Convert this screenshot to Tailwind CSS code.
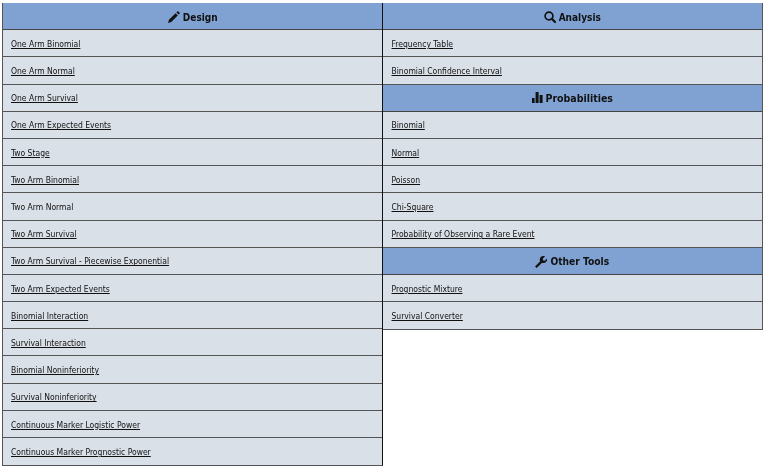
<!DOCTYPE html>
<html><head><meta charset="utf-8"><script src="https://cdn.jsdelivr.net/npm/@tailwindcss/browser@4"></script></head>
<body class="bg-white overflow-hidden">
<div class="w-[768px] h-[470px] pt-[3px] pl-[2px] font-['DejaVu_Sans_Condensed','DejaVu_Sans',sans-serif] text-[8.5px] text-[#111] blur-[0.4px]">
<div class="flex items-start w-[761px]">
<div class="w-[380.5px] border-l border-r border-b border-[#555] border-r-[#111] [&>a]:h-[27.2px] [&>a]:flex [&>a]:items-center [&>a]:pl-2 [&>a]:pt-[2px] [&>a]:bg-[#dae0e8] [&>a]:border-b [&>a]:border-[#555] [&>a]:underline [&>a:last-child]:border-b-0">
<div class="h-[27.2px] flex items-center justify-center gap-[3px] pt-[2px] pl-[1px] bg-[#7fa2d2] border-b border-[#444] text-[10px] font-bold text-[#111]"><svg class="w-[12px] h-[12px]" viewBox="0 0 12 12"><path fill="#111" d="M0 12l1-3.2L7.6 2.2l2.2 2.2L3.2 11zM8.4 1.4L9.8 0 12 2.2 10.6 3.6z"/></svg><span>Design</span></div>
<a>One Arm Binomial</a><a>One Arm Normal</a><a>One Arm Survival</a><a>One Arm Expected Events</a><a>Two Stage</a><a>Two Arm Binomial</a><a class="!no-underline">Two Arm Normal</a><a>Two Arm Survival</a><a>Two Arm Survival - Piecewise Exponential</a><a>Two Arm Expected Events</a><a>Binomial Interaction</a><a>Survival Interaction</a><a>Binomial Noninferiority</a><a>Survival Noninferiority</a><a>Continuous Marker Logistic Power</a><a>Continuous Marker Prognostic Power</a>
</div>
<div class="w-[380.5px] border-r border-b border-[#555] [&>a]:h-[27.2px] [&>a]:flex [&>a]:items-center [&>a]:pl-[9px] [&>a]:pt-[2px] [&>a]:bg-[#dae0e8] [&>a]:border-b [&>a]:border-[#555] [&>a]:underline [&>a:last-child]:border-b-0">
<div class="h-[27.2px] flex items-center justify-center gap-[3px] pt-[2px] bg-[#7fa2d2] border-b border-[#444] text-[10px] font-bold text-[#111]"><svg class="w-[12px] h-[12px]" viewBox="0 0 12 12"><circle cx="5" cy="5" r="3.9" fill="none" stroke="#111" stroke-width="1.7"/><path d="M7.8 7.8L11 11" stroke="#111" stroke-width="2.2" stroke-linecap="round"/></svg><span>Analysis</span></div>
<a>Frequency Table</a><a>Binomial Confidence Interval</a>
<div class="h-[27.2px] flex items-center justify-center gap-[3px] pt-[2px] bg-[#7fa2d2] border-b border-[#444] text-[10.5px] font-bold text-[#111]"><svg class="w-[11px] h-[11px] -translate-y-px" viewBox="0 0 11 11"><path fill="#111" d="M0 6h2.6v5H0zM3.6 0h3v11h-3zM7.6 3h3v8h-3z"/></svg><span>Probabilities</span></div>
<a>Binomial</a><a>Normal</a><a>Poisson</a><a>Chi-Square</a><a>Probability of Observing a Rare Event</a>
<div class="h-[27.2px] flex items-center justify-center gap-[3px] pt-[2px] bg-[#7fa2d2] border-b border-[#444] text-[10.2px] font-bold text-[#111]"><svg class="w-[12px] h-[12px]" viewBox="0 0 12 12"><path fill="#111" d="M1.6 12L0 10.4l5-5C4.4 3.4 5 1.4 6.6.6 7.8 0 9 0 10 .4L7.8 2.6l.3 1.8 1.8.3L12 2.5c.3 1.3 0 2.6-1 3.5-1 1-2.5 1.2-3.9.7z"/></svg><span>Other Tools</span></div>
<a>Prognostic Mixture</a><a>Survival Converter</a>
</div>
</div>
</div>
</body></html>
